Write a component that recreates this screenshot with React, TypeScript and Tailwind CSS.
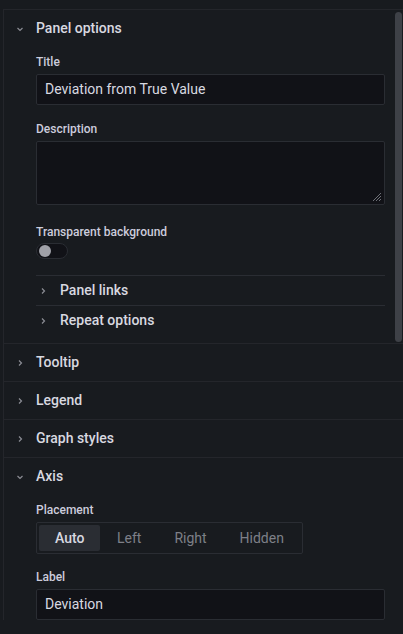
import React from 'react'

const font = { fontFamily: 'Roboto, "Liberation Sans", sans-serif' }

function Chevron({ open }: { open?: boolean }) {
  return (
    <span className="flex h-[12px] w-[12px] items-center justify-center text-[#8b8d94]">
      <svg width="8" height="8" viewBox="0 0 8 8" fill="none" stroke="currentColor" strokeWidth="1.2">
        {open ? <path d="M1.5 3 L4 5.5 L6.5 3" /> : <path d="M3 1.5 L5.5 4 L3 6.5" />}
      </svg>
    </span>
  )
}

function SectionHeader({ title, open }: { title: string; open?: boolean }) {
  return (
    <div className="flex h-[37px] items-center pl-[10px]">
      <Chevron open={open} />
      <span className="ml-[10px] text-[14px] font-medium text-[#d8d9e0]">{title}</span>
    </div>
  )
}

function Label({ children }: { children: React.ReactNode }) {
  return <div className="mb-[3px] text-[12px] font-medium leading-[18px] text-[#ccccdc]">{children}</div>
}

function TextInput({ value }: { value: string }) {
  return (
    <div className="flex h-[31px] items-center rounded-[2px] border border-[#2a2d33] bg-[#111217] px-2 text-[14px] text-[#d8d9e0]">
      {value}
    </div>
  )
}

function SubRow({ title }: { title: string }) {
  return (
    <div className="flex h-[29px] items-center">
      <span className="ml-[1px]">
        <Chevron />
      </span>
      <span className="ml-[11px] text-[14px] font-medium text-[#d8d9e0]">{title}</span>
    </div>
  )
}

export default function App() {
  const placements = ['Auto', 'Left', 'Right', 'Hidden']

  return (
    <div className="relative h-[634px] w-[403px] overflow-hidden bg-[#181b1f] pl-[3px] pt-[9px]" style={font}>
      <div className="border-l border-t border-[#24262b]">
        {/* Panel options */}
        <div className="border-b border-[#24262b]">
          <SectionHeader title="Panel options" open />
          <div className="pb-[8px] pl-[32px] pr-[18px] pt-[6px]">
            <Label>Title</Label>
            <TextInput value="Deviation from True Value" />

            <div className="mt-[15px]">
              <Label>Description</Label>
              <div className="relative h-[64px] rounded-[2px] border border-[#2a2d33] bg-[#111217]">
                <svg className="absolute bottom-[2px] right-[2px]" width="12" height="12" viewBox="0 0 12 12" stroke="#6e7077" strokeWidth="1">
                  <path d="M11 3 L3 11 M11 6 L6 11 M11 9 L9 11" />
                </svg>
              </div>
            </div>

            <div className="mt-[18px]">
              <Label>Transparent background</Label>
              <div className="mt-[-1px] flex h-[16px] w-[32px] items-center rounded-full border border-[#2a2d33] bg-[#111217] px-[2px]">
                <span className="h-[12px] w-[12px] rounded-full bg-[#a0a1a8]" />
              </div>
            </div>

            <div className="mt-4 border-t border-[#2a2d33]">
              <SubRow title="Panel links" />
            </div>
            <div className="border-t border-[#2a2d33]">
              <SubRow title="Repeat options" />
            </div>
          </div>
        </div>

        <div className="border-b border-[#24262b]">
          <SectionHeader title="Tooltip" />
        </div>
        <div className="border-b border-[#24262b]">
          <SectionHeader title="Legend" />
        </div>
        <div className="border-b border-[#24262b]">
          <SectionHeader title="Graph styles" />
        </div>

        {/* Axis */}
        <div>
          <SectionHeader title="Axis" open />
          <div className="pl-[32px] pr-[18px] pt-[6px]">
            <Label>Placement</Label>
            <div className="flex h-[32px] w-fit items-center rounded-[2px] border border-[#2a2d33] p-[2px]">
              {placements.map((p, i) => (
                <div
                  key={p}
                  className={
                    i === 0
                      ? 'flex h-[26px] items-center rounded-[2px] bg-[#2a2d33] px-4 text-[14px] font-medium text-[#d8d9e0]'
                      : 'flex h-[26px] items-center px-[16.5px] text-[14px] text-[#7e8088]'
                  }
                >
                  {p}
                </div>
              ))}
            </div>

            <div className="mt-[14px]">
              <Label>Label</Label>
              <TextInput value="Deviation" />
            </div>
          </div>
        </div>
      </div>

      {/* scrollbar */}
      <div className="absolute right-[1px] top-[12px] h-[330px] w-[7px] rounded-full bg-[#3e4147]" />
    </div>
  )
}
